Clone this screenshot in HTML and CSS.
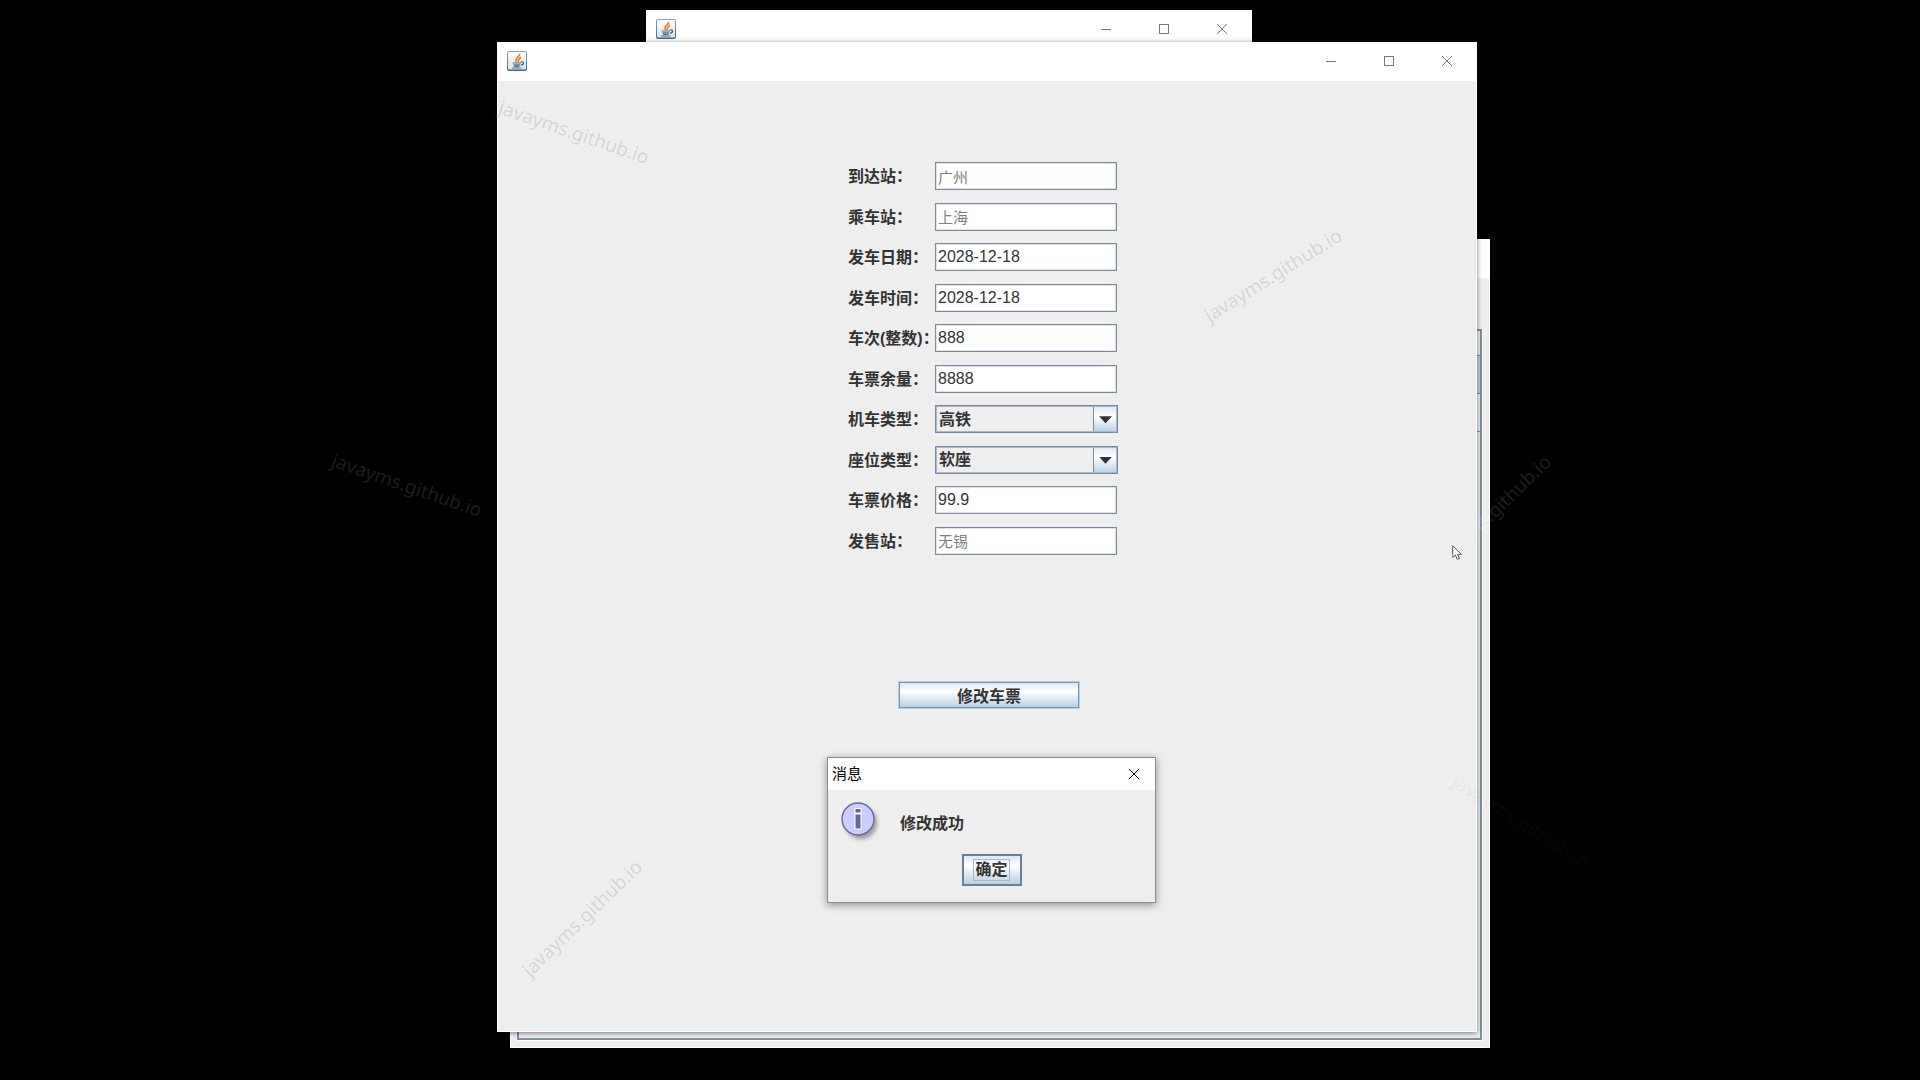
FILE: index.html
```
<!DOCTYPE html>
<html lang="zh-CN">
<head>
    <meta charset="UTF-8">
    <meta name="viewport" content="width=device-width, initial-scale=1.0">
    <title>修改车票</title>
    <link rel="stylesheet" href="styles.css">
</head>
<body>
    <svg class="defs" width="0" height="0" aria-hidden="true">
        <defs>
            <linearGradient id="frame" x1="0" y1="0" x2="0" y2="1">
                <stop offset="0" stop-color="#8fa6b9"/>
                <stop offset="1" stop-color="#3f6180"/>
            </linearGradient>
            <linearGradient id="paper" x1="0" y1="0" x2="0" y2="1">
                <stop offset="0" stop-color="#ffffff"/>
                <stop offset="1" stop-color="#dde3e8"/>
            </linearGradient>
        </defs>
        <symbol id="java" viewBox="0 0 20 20">
            <rect x="0" y="0" width="20" height="20" rx="2" fill="url(#frame)"/>
            <rect x="1" y="1" width="18" height="17.5" rx="1" fill="url(#paper)"/>
            <path d="M12.5 3.5C12.8 5.5 8 6.5 9.2 10.5M13.3 6.5C13 8 10.8 8.3 11.3 10.5" fill="none" stroke="#e9853a" stroke-width="1.8" stroke-linecap="round"/>
            <path d="M5.5 12H14M6.5 13.8H13M7 15.3H12.5M5 17H14.5" fill="none" stroke="#4c7291" stroke-width="1.2"/>
            <path d="M14 10.9C17.5 10.5 17.3 13.7 13.8 14.2" fill="none" stroke="#3f6585" stroke-width="1.4"/>
        </symbol>
        <symbol id="min" viewBox="0 0 12 12"><path d="M1 6.5H11" stroke="#777" fill="none"/></symbol>
        <symbol id="max" viewBox="0 0 12 12"><rect x="1.5" y="1.5" width="9" height="9" stroke="#777" fill="none"/></symbol>
        <symbol id="close" viewBox="0 0 12 12"><path d="M1 1L11 11M11 1L1 11" stroke="currentColor" fill="none"/></symbol>
    </svg>

    <div class="window window-login">
        <div class="titlebar">
            <svg class="logo"><use href="#java"/></svg>
            <div class="controls">
                <button type="button" aria-label="最小化"><svg><use href="#min"/></svg></button>
                <button type="button" aria-label="最大化"><svg><use href="#max"/></svg></button>
                <button type="button" aria-label="关闭"><svg><use href="#close"/></svg></button>
            </div>
        </div>
    </div>

    <div class="window window-list">
        <div class="titlebar"></div>
        <div class="list-body">
            <div class="scroll">
                <div class="row head"></div>
                <div class="row selected"></div>
                <div class="row"></div>
            </div>
        </div>
    </div>

    <main class="window window-edit">
        <div class="titlebar">
            <svg class="logo"><use href="#java"/></svg>
            <div class="controls">
                <button type="button" aria-label="最小化"><svg><use href="#min"/></svg></button>
                <button type="button" aria-label="最大化"><svg><use href="#max"/></svg></button>
                <button type="button" aria-label="关闭"><svg><use href="#close"/></svg></button>
            </div>
        </div>
        <form class="ticket-form">
            <div class="fields">
                <div class="field">
                    <label for="arrive">到达站：</label>
                    <input type="text" id="arrive" class="hint" value="广州">
                </div>
                <div class="field">
                    <label for="depart">乘车站：</label>
                    <input type="text" id="depart" class="hint" value="上海">
                </div>
                <div class="field">
                    <label for="date">发车日期：</label>
                    <input type="text" id="date" value="2028-12-18">
                </div>
                <div class="field">
                    <label for="time">发车时间：</label>
                    <input type="text" id="time" value="2028-12-18">
                </div>
                <div class="field">
                    <label for="number">车次(整数)：</label>
                    <input type="text" id="number" value="888">
                </div>
                <div class="field">
                    <label for="remain">车票余量：</label>
                    <input type="text" id="remain" value="8888">
                </div>
                <div class="field">
                    <label for="train">机车类型：</label>
                    <div class="combo">
                        <select id="train"><option>高铁</option></select>
                    </div>
                </div>
                <div class="field">
                    <label for="seat">座位类型：</label>
                    <div class="combo">
                        <select id="seat"><option>软座</option></select>
                    </div>
                </div>
                <div class="field">
                    <label for="price">车票价格：</label>
                    <input type="text" id="price" value="99.9">
                </div>
                <div class="field">
                    <label for="sale">发售站：</label>
                    <input type="text" id="sale" class="hint" value="无锡">
                </div>
            </div>
            <button type="button" class="btn">修改车票</button>
        </form>
    </main>

    <div class="dialog" role="dialog" aria-labelledby="dialogTitle">
        <div class="dialog-title">
            <span id="dialogTitle">消息</span>
            <button type="button" aria-label="关闭"><svg><use href="#close"/></svg></button>
        </div>
        <div class="message">
            <svg class="info" viewBox="0 0 38 40">
                <circle cx="20" cy="21" r="16" fill="#999" class="info-shadow"/>
                <circle cx="17" cy="17" r="16" fill="#ccccff" stroke="#666699" stroke-width="1.4"/>
                <path d="M13.5 6H20.5V11.5H13.5ZM13.5 11.5H20.5V27.5H13.5Z" fill="#fff"/>
                <path d="M14.5 7H19.5V10.5H14.5ZM14.5 12.5H19.5V26.5H14.5Z" fill="#666699"/>
            </svg>
            <span>修改成功</span>
        </div>
        <button type="button" class="btn btn-ok"><span>确定</span></button>
    </div>

    <svg class="cursor" viewBox="0 0 11 16">
        <path d="M.7 .8V12.5L3.4 10L5.3 14.3L7.4 13.4L5.6 9.3H9.4Z" fill="#fff" stroke="#555"/>
    </svg>

    <div class="marks" aria-hidden="true">
        <span class="mark m1">javayms.github.io</span>
        <span class="mark m2">javayms.github.io</span>
        <span class="mark m3">javayms.github.io</span>
        <span class="mark m4">javayms.github.io</span>
        <span class="mark m5">javayms.github.io</span>
        <span class="mark m6">javayms.github.io</span>
    </div>
</body>
</html>
```
FILE: styles.css
```
* {
    box-sizing: border-box;
}
body {
    margin: 0;
    min-height: 100vh;
    overflow: hidden;
    position: relative;
    background-color: #000;
    color: #333;
    font-family: "Liberation Sans", "Noto Sans CJK SC", sans-serif;
    font-size: 16px;
}
.defs {
    position: absolute;
}
button, input, select {
    font-family: inherit;
    font-size: 16px;
    color: #333;
}

/* Fenêtres */
.window {
    position: absolute;
    display: flex;
    flex-direction: column;
    background-color: #eee;
    border: 1px solid #fff;
    box-shadow: 0 1px 5px rgba(0,0,0,0.5);
}
.window-login {
    top: 10px;
    left: 646px;
    right: 668px;
}
.window-list {
    top: 239px;
    bottom: 32px;
    left: 510px;
    right: 430px;
}
.window-edit {
    top: 42px;
    bottom: 48px;
    left: 497px;
    right: 443px;
}
.titlebar {
    display: flex;
    align-items: center;
    justify-content: space-between;
    height: 38px;
    padding: 0 0 2px 9px;
    background-color: #fff;
}
.logo {
    width: 20px;
    height: 20px;
}
.controls {
    display: flex;
}
.controls button {
    width: 58px;
    height: 34px;
    padding: 0;
    border: none;
    background: none;
    color: #777;
}
.controls svg, .dialog-title svg {
    display: block;
    width: 12px;
    height: 12px;
    margin: 0 auto;
}

/* Tableau en arrière-plan */
.list-body {
    flex: 1;
    display: flex;
    padding: 51px 7px 7px 6px;
}
.scroll {
    flex: 1;
    border: 2px solid #7f919f;
    box-shadow: 1px 1px 0 #fff;
}
.row {
    height: 38px;
    border-bottom: 1px solid #7a8a99;
}
.row.head {
    height: 25px;
}
.row.selected {
    background-color: #b8cfe5;
}

/* Formulaire */
.ticket-form {
    display: flex;
    flex-direction: column;
    align-items: center;
    gap: 126px;
    padding: 81px 0 0 4px;
}
.fields {
    display: flex;
    flex-direction: column;
    justify-content: space-between;
    height: 393px;
    padding-right: 12px;
}
.field {
    display: grid;
    grid-template-columns: 87px 183px;
    align-items: center;
    height: 28px;
}
label {
    padding-top: 2px;
    font-weight: bold;
    line-height: 26px;
    white-space: nowrap;
}
input {
    width: 182px;
    height: 28px;
    padding: 0 2px;
    border: 1px solid #7a8a99;
    outline: 1px solid #dce3ea;
    outline-offset: -2px;
    background-color: #fff;
}
input.hint {
    font-size: 15px;
    color: #808080;
}
.combo {
    position: relative;
}
.combo::after {
    content: "";
    position: absolute;
    top: 11px;
    right: 6px;
    width: 13px;
    height: 7px;
    background-color: #333;
    clip-path: polygon(0 0, 100% 0, 50% 100%);
    pointer-events: none;
}
select {
    display: block;
    appearance: none;
    width: 100%;
    height: 28px;
    padding: 0 28px 0 3px;
    border: 1px solid #7a8a99;
    border-radius: 0;
    box-shadow: inset 0 0 0 1px #a3b8cc;
    background: linear-gradient(#7a8a99, #7a8a99) right 23px top / 1px 100% no-repeat,
        linear-gradient(#dde8f3, #fff 40%, #b8cfe5) right top / 23px 100% no-repeat, #eee;
    font-weight: bold;
}
.btn {
    width: 182px;
    height: 28px;
    padding: 0;
    border: 2px solid #7a93ad;
    outline: 1px solid #b8cfe5;
    outline-offset: -1px;
    background: linear-gradient(#dde8f3, #fff 35%, #b8cfe5);
    font-weight: bold;
}

/* Boîte de message */
.dialog {
    position: absolute;
    top: 757px;
    left: 827px;
    width: 329px;
    display: flex;
    flex-direction: column;
    padding-bottom: 16px;
    border: 1px solid #8c8c8c;
    background-color: #eee;
    box-shadow: 0 2px 8px rgba(0,0,0,0.4);
}
.dialog-title {
    display: flex;
    align-items: center;
    justify-content: space-between;
    height: 32px;
    padding-left: 4px;
    background-color: #fff;
    color: #000;
    font-size: 15px;
    line-height: 20px;
}
.dialog-title button {
    width: 42px;
    height: 30px;
    padding: 0;
    border: none;
    background: none;
    color: #000;
}
.message {
    display: flex;
    align-items: center;
    gap: 21px;
    padding: 12px 13px 0;
    font-weight: bold;
}
.info {
    width: 38px;
    height: 40px;
    overflow: visible;
}
.info-shadow {
    filter: blur(2px);
}
.btn-ok {
    align-self: center;
    width: 60px;
    height: 32px;
    margin-top: 12px;
    border-color: #6b7f93;
    outline: none;
}
.btn-ok span {
    display: inline-block;
    padding: 0 1px;
    line-height: 20px;
    border: 1px solid #a3b8cc;
}

.cursor {
    position: absolute;
    top: 545px;
    left: 1452px;
    width: 11px;
    height: 16px;
}

/* Filigranes */
.mark {
    position: absolute;
    font-family: "Noto Sans", sans-serif;
    font-size: 19px;
    line-height: 24px;
    color: rgba(128,128,128,0.24);
    pointer-events: none;
}
.m1 {
    top: 132px;
    left: 574px;
    transform: translate(-50%, -50%) rotate(19deg);
}
.m2 {
    top: 485px;
    left: 407px;
    transform: translate(-50%, -50%) rotate(19deg);
}
.m3 {
    top: 275px;
    left: 1273px;
    transform: translate(-50%, -50%) rotate(-32deg);
}
.m4 {
    top: 918px;
    left: 582px;
    transform: translate(-50%, -50%) rotate(-44deg);
}
.m5 {
    top: 513px;
    left: 1491px;
    color: rgba(255,255,255,0.13);
    transform: translate(-50%, -50%) rotate(-44deg);
}
.m6 {
    top: 821px;
    left: 1521px;
    color: rgba(110,110,110,0.07);
    transform: translate(-50%, -50%) rotate(32deg);
}
```
